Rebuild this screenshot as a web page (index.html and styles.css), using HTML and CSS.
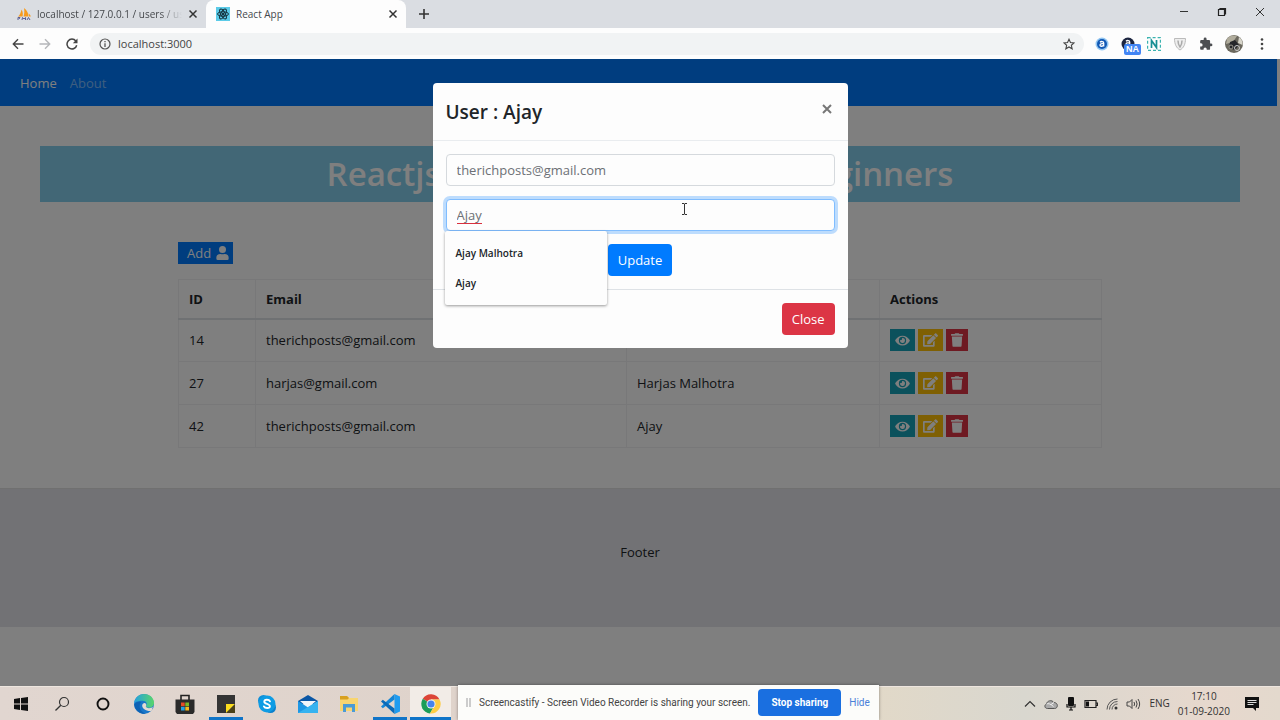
FILE: index.html
```html
<!DOCTYPE html>
<html lang="en">

<head>
    <meta charset="UTF-8">
    <meta name="viewport" content="width=device-width, initial-scale=1.0">
    <title>React App</title>
    <link rel="stylesheet" href="styles.css">
</head>

<body>
    <!-- shared icons -->
    <svg class="sprite" aria-hidden="true">
        <symbol id="icon-close" viewBox="0 0 10 10">
            <path d="M1.5 1.5l7 7M8.500 1.500l-7 7" fill="none" stroke="currentColor" stroke-width="1.500" />
        </symbol>
        <symbol id="icon-eye" viewBox="0 0 576 512">
            <path fill="currentColor" d="M572 241C518 136 411 64 288 64S58 136 4 241a32 32 0 0 0 0 30c54 105 161 177 284 177s230-72 284-177a32 32 0 0 0 0-30zM288 400a144 144 0 1 1 0-288 144 144 0 0 1 0 288zm0-240a95 95 0 0 0-25 4 48 48 0 0 1-67 67 96 96 0 1 0 92-71z" />
        </symbol>
        <symbol id="icon-edit" viewBox="0 0 576 512">
            <path fill="currentColor" d="M402 84l90 90c4 4 4 10 0 14L274 406l-93 10c-12 2-23-9-21-21l10-93L388 84c4-4 10-4 14 0zm162-23l-49-49c-15-15-40-15-55 0l-35 35c-4 4-4 10 0 14l90 90c4 4 10 4 14 0l35-35c15-15 15-40 0-55zM384 346v102H64V128h230c3 0 6-1 8-4l40-40c8-7 3-20-8-20H48C22 64 0 86 0 112v352c0 27 22 48 48 48h352c27 0 48-21 48-48V306c0-11-13-16-20-8l-40 40c-3 2-4 5-4 8z" />
        </symbol>
        <symbol id="icon-trash" viewBox="0 0 448 512">
            <path fill="currentColor" d="M432 32H312l-9-19a24 24 0 0 0-22-13H167a24 24 0 0 0-22 13l-9 19H16A16 16 0 0 0 0 48v32a16 16 0 0 0 16 16h416a16 16 0 0 0 16-16V48a16 16 0 0 0-16-16zM32 128l21 339a48 48 0 0 0 48 45h246a48 48 0 0 0 48-45l21-339z" />
        </symbol>
    </svg>

    <header class="browser">
        <div class="tabs">
            <div class="tab">
                <svg class="favicon" viewBox="0 0 14 14">
                    <path d="M1 9.500C3 8 4 5 4.500 2.500 6 5 6 7.500 5.500 9.500zM6.500 9.500C7.500 7 7.500 4 7 1c3 2 4.500 5.500 4.500 8.500zM12 9.500c0-1.500 0-2-.5-3 1 .5 2 1.500 2.300 3z" fill="#f79a1c" />
                    <path d="M1 13v-2.500h2l-1 1.500M5 13l.5-2.500L7 12l1.500-1.500V13M10 13l1.500-2.500L13 13" fill="none" stroke="#5b5f94" />
                </svg>
                <span class="tab-title faded">localhost / 127.0.0.1 / users / use</span>
                <button class="icon-btn" aria-label="Close tab"><svg width="10" height="10"><use href="#icon-close" /></svg></button>
            </div>
            <div class="tab active">
                <svg class="favicon" viewBox="0 0 14 14">
                    <path d="M0 0h14v14H0z" fill="#5ccbe8" />
                    <g fill="none" stroke="#15323c">
                        <ellipse cx="7" cy="7" rx="5.500" ry="2.200" />
                        <ellipse cx="7" cy="7" rx="5.500" ry="2.200" transform="rotate(60 7 7)" />
                        <ellipse cx="7" cy="7" rx="5.500" ry="2.200" transform="rotate(120 7 7)" />
                    </g>
                    <circle cx="7" cy="7" r="1.200" fill="#15323c" />
                </svg>
                <span class="tab-title">React App</span>
                <button class="icon-btn" aria-label="Close tab"><svg width="10" height="10"><use href="#icon-close" /></svg></button>
            </div>
            <button class="icon-btn new-tab" aria-label="New tab"><svg width="12" height="12" viewBox="0 0 12 12"><path d="M6 1v10M1 6h10" stroke="#333" stroke-width="1.600" /></svg></button>
            <div class="window-controls">
                <button class="icon-btn" aria-label="Minimize"><svg width="10" height="10" viewBox="0 0 10 10"><path d="M1 4.500h8" stroke="#333" /></svg></button>
                <button class="icon-btn" aria-label="Restore"><svg width="10" height="10" viewBox="0 0 10 10"><path d="M1.500 2.500h6v6h-6zM3 2.500v-1h5.500V7h-1" fill="none" stroke="#222" stroke-width="1.200" /></svg></button>
                <button class="icon-btn" aria-label="Close"><svg width="10" height="10" viewBox="0 0 10 10"><path d="M1 1l8 8M9 1L1 9" stroke="#333" /></svg></button>
            </div>
        </div>

        <div class="toolbar">
            <div class="nav-buttons">
                <button class="icon-btn" aria-label="Back"><svg width="12" height="12" viewBox="0 0 12 12"><path d="M11.500 6H1.500M6 1.300L1.300 6 6 10.700" fill="none" stroke="#444" stroke-width="1.400" /></svg></button>
                <button class="icon-btn" aria-label="Forward"><svg width="12" height="12" viewBox="0 0 12 12"><path d="M.5 6h10M6 1.300L10.700 6 6 10.700" fill="none" stroke="#b5b7ba" stroke-width="1.400" /></svg></button>
                <button class="icon-btn" aria-label="Reload"><svg width="12" height="12" viewBox="0 0 12 12"><path d="M10.700 7.200A4.900 4.900 0 1 1 9.800 3" fill="none" stroke="#444" stroke-width="1.500" /><path d="M11.500.5v4.700H6.800z" fill="#444" /></svg></button>
            </div>
            <div class="omnibox">
                <svg width="12" height="12" viewBox="0 0 12 12"><circle cx="6" cy="6" r="5" fill="none" stroke="#555" stroke-width="1.200" /><path d="M6 5.200V9M6 3v1.300" stroke="#555" stroke-width="1.300" /></svg>
                <input type="text" aria-label="Address" value="localhost:3000">
                <button class="icon-btn" aria-label="Bookmark"><svg width="12" height="12" viewBox="0 0 24 24"><path d="M12 2.500l2.900 6.600 7.200.7-5.400 4.800 1.600 7L12 17.900l-6.300 3.700 1.600-7L1.900 9.800l7.200-.7z" fill="none" stroke="#444" stroke-width="2.200" /></svg></button>
            </div>
            <div class="extensions">
                <button class="icon-btn" aria-label="Extension"><svg width="14" height="14" viewBox="0 0 14 14"><circle cx="7" cy="7" r="6.500" fill="#93c7f2" /><circle cx="7" cy="7" r="5" fill="#1259b5" /><path d="M5 5.200c1-1 3.700-1 3.700.7v3.600M8.700 6.800C6.500 6.500 5 7 5 8.200s2.700 1.600 3.700 0" fill="none" stroke="#fff" stroke-width="1.300" /></svg></button>
                <button class="icon-btn badged" aria-label="Extension"><svg width="14" height="14" viewBox="0 0 14 14"><circle cx="7" cy="7" r="6.500" fill="#1c2540" /><path d="M5 4.200c1-1 3.700-1 3.700.7v3M8.700 6C6.500 5.500 5 6 5 7.200" fill="none" stroke="#fff" stroke-width="1.300" /></svg><span class="badge">NA</span></button>
                <button class="icon-btn" aria-label="Extension"><svg width="14" height="14" viewBox="0 0 14 14"><path d="M.6.6h12.800v12.800H.6z" fill="none" stroke="#3bb3b0" stroke-width="1.200" stroke-dasharray="3 2" /><path d="M4.500 11V3.500l5 7V3" fill="none" stroke="#168f94" stroke-width="1.700" /></svg></button>
                <button class="icon-btn" aria-label="Extension"><svg width="14" height="14" viewBox="0 0 14 14"><path d="M1.500 1.500h11c0 6-2 9.500-5.500 11.500-3.500-2-5.500-5.500-5.500-11.500z" fill="#eee" stroke="#bbb" /><path d="M5 3.500c0 3 .7 5 2 6.500 1.300-1.500 2-3.500 2-6.500" fill="none" stroke="#aaa" stroke-width="1.500" /></svg></button>
                <button class="icon-btn" aria-label="Extensions"><svg width="14" height="14" viewBox="0 0 24 24"><path d="M20.500 11H19V7a2 2 0 0 0-2-2h-4V3.500a2.500 2.500 0 0 0-5 0V5H4a2 2 0 0 0-2 2v3.800h1.500a2.700 2.700 0 0 1 0 5.400H2V20c0 1.100.9 2 2 2h3.800v-1.500a2.700 2.700 0 0 1 5.400 0V22H17a2 2 0 0 0 2-2v-4h1.500a2.500 2.500 0 0 0 0-5z" fill="#4d4f52" /></svg></button>
                <button class="icon-btn" aria-label="Profile"><svg width="18" height="18" viewBox="0 0 18 18"><circle cx="9" cy="9" r="9" fill="#6b685e" /><path d="M2 3.500C5 0 9 0 12 1L8 7l-7 2z" fill="#b0ac9c" /><path d="M14 2c3 2 4 6 3.500 8L13 8z" fill="#d8d6cb" /><path d="M5 7l5-2 4 5-4 5-6-2z" fill="#25262a" /><circle cx="12" cy="13" r="2.500" fill="none" stroke="#ccc" /><circle cx="6" cy="12" r="2" fill="none" stroke="#99968c" /></svg></button>
                <button class="icon-btn" aria-label="Menu"><svg width="14" height="14" viewBox="0 0 14 14"><g fill="#444"><circle cx="7" cy="2.500" r="1.300" /><circle cx="7" cy="7" r="1.300" /><circle cx="7" cy="11.500" r="1.300" /></g></svg></button>
            </div>
        </div>
    </header>

    <main class="viewport">
        <nav class="navbar">
            <a class="nav-link active" href="#">Home</a>
            <a class="nav-link" href="#">About</a>
        </nav>

        <h1 class="page-title">Reactjs Crud Tutorial App for Beginners</h1>

        <div class="container">
            <button class="btn-sm btn-add">Add <svg width="13" height="14" viewBox="0 0 448 512"><path fill="currentColor" d="M224 256a128 128 0 1 0 0-256 128 128 0 0 0 0 256zm90 32h-17a174 174 0 0 1-146 0h-17C60 288 0 348 0 422v42a48 48 0 0 0 48 48h352a48 48 0 0 0 48-48v-42c0-74-60-134-134-134z" /></svg></button>
            <table class="users">
                <thead>
                    <tr>
                        <th class="col-id">ID</th>
                        <th class="col-email">Email</th>
                        <th class="col-name">Username</th>
                        <th>Actions</th>
                    </tr>
                </thead>
                <tbody>
                    <tr>
                        <td>14</td>
                        <td>therichposts@gmail.com</td>
                        <td>Ajay</td>
                        <td>
                            <div class="actions">
                                <button class="btn-sm btn-info" aria-label="View"><svg width="15" height="13"><use href="#icon-eye" /></svg></button>
                                <button class="btn-sm btn-warning" aria-label="Edit"><svg width="15" height="14"><use href="#icon-edit" /></svg></button>
                                <button class="btn-sm btn-danger" aria-label="Delete"><svg width="12" height="14"><use href="#icon-trash" /></svg></button>
                            </div>
                        </td>
                    </tr>
                    <tr>
                        <td>27</td>
                        <td>harjas@gmail.com</td>
                        <td>Harjas Malhotra</td>
                        <td>
                            <div class="actions">
                                <button class="btn-sm btn-info" aria-label="View"><svg width="15" height="13"><use href="#icon-eye" /></svg></button>
                                <button class="btn-sm btn-warning" aria-label="Edit"><svg width="15" height="14"><use href="#icon-edit" /></svg></button>
                                <button class="btn-sm btn-danger" aria-label="Delete"><svg width="12" height="14"><use href="#icon-trash" /></svg></button>
                            </div>
                        </td>
                    </tr>
                    <tr>
                        <td>42</td>
                        <td>therichposts@gmail.com</td>
                        <td>Ajay</td>
                        <td>
                            <div class="actions">
                                <button class="btn-sm btn-info" aria-label="View"><svg width="15" height="13"><use href="#icon-eye" /></svg></button>
                                <button class="btn-sm btn-warning" aria-label="Edit"><svg width="15" height="14"><use href="#icon-edit" /></svg></button>
                                <button class="btn-sm btn-danger" aria-label="Delete"><svg width="12" height="14"><use href="#icon-trash" /></svg></button>
                            </div>
                        </td>
                    </tr>
                </tbody>
            </table>
        </div>

        <footer class="footer">Footer</footer>

        <div class="backdrop">
            <div class="modal" role="dialog" aria-labelledby="modal-title">
                <div class="modal-header">
                    <h2 id="modal-title">User : Ajay</h2>
                    <button class="icon-btn modal-close" aria-label="Close"><svg width="10" height="10" viewBox="0 0 10 10"><path d="M1 1l8 8M9 1L1 9" stroke="#777" stroke-width="2" /></svg></button>
                </div>
                <form class="modal-body" onsubmit="return false">
                    <input class="form-control" type="text" aria-label="Email" value="therichposts@gmail.com">
                    <div class="suggest-field">
                        <input class="form-control focused misspelled" type="text" aria-label="Username" value="Ajay" autocomplete="off">
                        <ul class="suggestions">
                            <li>Ajay Malhotra</li>
                            <li>Ajay</li>
                        </ul>
                        <svg class="cursor" width="7" height="12" viewBox="0 0 7 12"><path d="M1 .5h2l.5.500L4 .5h2M3.500 1v10M1 11.500h2l.5-.5.5.5h2" fill="none" stroke="#333" /></svg>
                    </div>
                    <button class="btn btn-primary">Update</button>
                </form>
                <div class="modal-footer">
                    <button class="btn btn-close">Close</button>
                </div>
            </div>
        </div>
    </main>

    <div class="taskbar">
        <div class="apps">
            <button class="app" aria-label="Start"><svg width="16" height="16" viewBox="0 0 16 16"><path d="M1 3l6-1v5.600H1zM8 1.900L15 1v6.600H8zM1 8.400h6V14l-6-1zM8 8.400h7V15l-7-.9z" fill="#111" /></svg></button>
            <button class="app" aria-label="Search"><svg width="16" height="16" viewBox="0 0 16 16"><circle cx="10" cy="6" r="4.500" fill="none" stroke="#333" stroke-width="1.200" /><path d="M6.800 9.200L1.500 14.500" stroke="#333" stroke-width="1.300" /></svg></button>
            <button class="app" aria-label="Cortana"><svg width="16" height="16" viewBox="0 0 16 16"><circle cx="8" cy="8" r="5.500" fill="none" stroke="#111" stroke-width="1.900" /></svg></button>
            <button class="app" aria-label="Edge"><svg width="20" height="20" viewBox="0 0 20 20">
                <defs><linearGradient id="edge-top"><stop offset="0" stop-color="#249fe0" /><stop offset="1" stop-color="#59d66a" /></linearGradient></defs>
                <circle cx="10" cy="10" r="10" fill="#1876c9" />
                <path d="M0 9.500C.5 4 4.700 0 10 0c5.800 0 10 4 10 8.800 0 3.200-2.500 5-5 5-2.200 0-3.500-.8-3-1.500 1.800-2.500.2-5.500-3.400-5.500C4 6.800.8 8 0 9.500z" fill="url(#edge-top)" />
                <path d="M11 9c2 1.300 1.200 2.900.8 3.600 0 1.200 3.800 2.700 7.200.2L17.500 17C12 17.500 8 14.500 8.200 11.500 8.300 10 9.500 8.800 11 9z" fill="#e3dad3" />
                <path d="M7 8c-3 4-1 10 5 11.800C5 20.500.5 15 .2 10.500 2 8 4.500 7.600 7 8z" fill="#0d62b4" />
            </svg></button>
            <button class="app" aria-label="Store"><svg width="20" height="20" viewBox="0 0 20 20"><path d="M6 6V1.500h8V6" fill="none" stroke="#222" stroke-width="1.600" /><path d="M.5 5.500h19V18l-1.500 2H2L.5 18z" fill="#2a2a2a" /><path d="M6 8.500h3.700v3.700H6z" fill="#e64b26" /><path d="M10.300 8.500H14v3.700h-3.700z" fill="#7ab829" /><path d="M6 12.800h3.700v3.700H6z" fill="#22a1e2" /><path d="M10.300 12.800H14v3.700h-3.700z" fill="#f4b81e" /></svg></button>
            <button class="app open" aria-label="Sticky Notes"><svg width="18" height="18" viewBox="0 0 18 18"><path d="M0 0h18v9l-9 9H0z" fill="#343434" /><path d="M9 9h9l-9 9z" fill="#fbdc1e" /><path d="M18 9v9H9z" fill="#4b4119" /></svg></button>
            <button class="app" aria-label="Skype"><svg width="20" height="20" viewBox="0 0 20 20"><circle cx="6.500" cy="6.500" r="5.500" fill="#0d8fd8" /><circle cx="13.500" cy="13.500" r="5.500" fill="#0a80cd" /><circle cx="10" cy="10" r="8.500" fill="#0e9ce4" /><path d="M13 7.300C12 5.300 7.300 5.200 7.300 7.700c0 2.600 5.600 1.700 5.600 4.500 0 2.500-5 2.400-6 .2" fill="none" stroke="#fff" stroke-width="1.900" stroke-linecap="round" /></svg></button>
            <button class="app" aria-label="Mail"><svg width="20" height="18" viewBox="0 0 20 18"><path d="M0 6l10-6 10 6v3H0z" fill="#0b57a5" /><path d="M2 6h16l-8 7z" fill="#f2f6fb" /><path d="M0 6l10 6.500L20 6v12H0z" fill="#1e97e4" /><path d="M0 18L20 6v12z" fill="#36b3f0" /></svg></button>
            <button class="app" aria-label="File Explorer"><svg width="18" height="18" viewBox="0 0 18 18"><path d="M0 1h7l2 2h9v13H0z" fill="#f8d571" /><path d="M0 1h7l2 2-1.500 1.500H0z" fill="#d8a020" /><path d="M3 17V9h12v8h-3v-4.500H6V17z" fill="#4b9bd6" /></svg></button>
            <button class="app open" aria-label="Visual Studio Code"><svg width="20" height="20" viewBox="0 0 20 20"><path d="M14.500 0L20 2.500v15L14.500 20z" fill="#1f9cf0" /><path d="M14.500 0L1 12.500l1.800 1.800L14.500 5.500z" fill="#1486d6" /><path d="M14.500 20L1 7.500l1.800-1.800 11.700 8.800z" fill="#0a6ab8" /></svg></button>
            <button class="app open current" aria-label="Chrome"><svg width="20" height="20" viewBox="0 0 20 20"><path d="M10 10L1.800 4.800A9.600 9.600 0 0 1 18.500 5.500H10z" fill="#dc4437" /><path d="M10 10l-8.200-5.200A9.600 9.600 0 0 0 9 19.500l4-7z" fill="#1b9d59" /><path d="M10 5.500h8.500A9.600 9.600 0 0 1 9 19.500l4.500-8z" fill="#fccc45" /><circle cx="10" cy="10" r="4.500" fill="#f4f4f4" /><circle cx="10" cy="10" r="3.600" fill="#4583ec" /></svg></button>
        </div>

        <div class="tray">
            <svg width="12" height="12" viewBox="0 0 12 12"><path d="M1 8.500l5-5 5 5" fill="none" stroke="#333" stroke-width="1.200" /></svg>
            <svg width="14" height="12" viewBox="0 0 14 12"><path d="M3.500 10.500C.5 10.500 0 7 2.500 6 3 2.500 8 1.500 9.800 4.500c3 0 4.200 2.500 3.200 4.500-.5 1-1.200 1.500-2.500 1.500z" fill="#aaa" stroke="#555" /><path d="M2.500 6c2-1 4 0 7 2.500M7 6.500l3-2" fill="none" stroke="#eee" /></svg>
            <svg width="10" height="14" viewBox="0 0 10 14"><rect x="2" width="6" height="9" rx="1" fill="#111" /><path d="M1 7v3h8V7M5 10v3M3 13h4" fill="none" stroke="#111" stroke-width="1.200" /></svg>
            <svg width="14" height="12" viewBox="0 0 14 12"><path d="M1 2.500h11v7H1zM12 5h1.500v2.500H12" fill="none" stroke="#222" stroke-width="1.200" /><path d="M2 3.500h3v5H2z" fill="#111" /></svg>
            <svg width="12" height="12" viewBox="0 0 12 12"><g fill="none" stroke="#555"><path d="M1 11.500A10.500 10.500 0 0 1 11.500 1M3.500 11.500a8 8 0 0 1 8-8M6 11.500A5.500 5.500 0 0 1 11.500 6" /></g><circle cx="10" cy="10" r="1.500" fill="#333" /></svg>
            <svg width="15" height="12" viewBox="0 0 15 12"><path d="M1 4h2.500L6 1.500v9L3.500 8H1zM8 4q1.200 2 0 4M10 2.500q2.200 3.500 0 7M12 1q3.300 5 0 10" fill="none" stroke="#444" /></svg>
            <span class="lang">ENG</span>
            <div class="clock">
                <div>17:10</div>
                <div>01-09-2020</div>
            </div>
            <svg class="notify" width="14" height="14" viewBox="0 0 14 14"><path d="M0 0h14v11h-3v3l-3-3H0z" fill="#111" /><path d="M2.500 3.500h9M2.500 5.500h9M2.500 7.500h6" stroke="#ddd" /></svg>
        </div>

        <div class="share-bar">
            <span class="grip"></span>
            <span>Screencastify - Screen Video Recorder is sharing your screen.</span>
            <button class="stop">Stop sharing</button>
            <a href="#">Hide</a>
        </div>
    </div>
</body>

</html>
```
FILE: styles.css
```css
* {
    box-sizing: border-box;
    margin: 0;
    padding: 0;
}

body {
    display: flex;
    flex-direction: column;
    min-height: 100vh;
    font-family: "Segoe UI", "Open Sans", "Noto Sans", sans-serif;
    font-size: 13px;
    line-height: 22px;
    color: #212529;
}

button,
input {
    font: inherit;
    color: inherit;
}

button {
    border: 0;
    background: none;
    cursor: pointer;
}

svg {
    display: block;
    flex: none;
}

.sprite {
    position: absolute;
    width: 0;
    height: 0;
}

.icon-btn {
    display: flex;
    align-items: center;
    justify-content: center;
    color: #333;
}

/* browser window */

.browser {
    background: #dadde2;
}

.tabs {
    display: flex;
    align-items: center;
    height: 28px;
}

.tab {
    display: flex;
    align-items: center;
    gap: 6px;
    width: 206px;
    height: 28px;
    padding: 0 8px 0 17px;
    font-size: 10px;
    color: #45484c;
}

.tab.active {
    width: 200px;
    padding-left: 10px;
    border-radius: 8px 8px 0 0;
    background: #fdfdfd;
}

.favicon {
    width: 14px;
    height: 14px;
}

.tab-title {
    flex: 1;
    overflow: hidden;
    white-space: nowrap;
}

.tab-title.faded {
    -webkit-mask-image: linear-gradient(to right, #000 85%, transparent);
    mask-image: linear-gradient(to right, #000 85%, transparent);
}

.new-tab {
    margin-left: 12px;
}

.window-controls {
    display: flex;
    gap: 28px;
    margin-left: auto;
    padding: 0 15px 4px 0;
}

.toolbar {
    display: flex;
    align-items: center;
    height: 31px;
    padding: 0 11px 0 12px;
    background: #fdfdfd;
}

.nav-buttons {
    display: flex;
    gap: 15px;
}

.omnibox {
    display: flex;
    flex: 1;
    align-items: center;
    gap: 7px;
    height: 22px;
    margin: 0 11px 0 12px;
    padding: 0 9px;
    border-radius: 11px;
    background: #f1f3f4;
}

.omnibox input {
    flex: 1;
    border: 0;
    outline: 0;
    background: none;
    font-size: 11px;
    line-height: 20px;
    color: #444;
}

.extensions {
    display: flex;
    align-items: center;
    gap: 12px;
}

.badged {
    position: relative;
}

.badge {
    position: absolute;
    top: 7px;
    left: 3px;
    padding: 0 2px;
    border-radius: 2px;
    background: #4285f4;
    font: bold 9px/11px "Liberation Sans", Arial, sans-serif;
    color: #fff;
}

/* react page */

.viewport {
    position: relative;
    flex: 1;
    background: #fff;
}

.navbar {
    display: flex;
    align-items: center;
    gap: 13px;
    height: 47px;
    margin-right: 3px;
    padding: 0 20px;
    background: #007bff;
}

.nav-link {
    color: rgba(255, 255, 255, .5);
    text-decoration: none;
}

.nav-link.active {
    color: #fff;
}

.page-title {
    margin: 40px;
    padding: 6px;
    background: #84ceec;
    font-size: 33px;
    font-weight: 600;
    line-height: 44px;
    text-align: center;
    color: #fff;
}

.container {
    max-width: 924px;
    margin: 0 auto 40px;
}

.btn-sm {
    display: flex;
    align-items: center;
    height: 22px;
    padding: 0 5px;
    color: #fff;
}

.btn-add {
    gap: 5px;
    margin-bottom: 15px;
    padding: 0 4px 0 9px;
    background: #007bff;
}

.btn-info {
    background: #17a2b8;
}

.btn-warning {
    background: #ffc107;
}

.btn-danger {
    background: #dc3545;
}

.users {
    width: 100%;
    border-collapse: collapse;
    table-layout: fixed;
}

.users th,
.users td {
    height: 43px;
    padding: 0 10px;
    border: 1px solid #f0f1f3;
    text-align: left;
}

.users th {
    height: 39px;
    border-bottom: 2px solid #dee2e6;
    font-weight: 700;
}

.col-id {
    width: 77px;
}

.col-email {
    width: 371px;
}

.col-name {
    width: 253px;
}

.actions {
    display: flex;
    gap: 3px;
}

.footer {
    padding: 48px 0 60px;
    margin-bottom: 58px;
    border-top: 1px solid #e0e0e0;
    background: #e4e5ea;
    line-height: 30px;
    text-align: center;
}

/* modal */

.backdrop {
    position: absolute;
    inset: 0;
    padding-top: 24px;
    background: rgba(0, 0, 0, .5);
}

.modal {
    max-width: 415px;
    margin: 0 auto;
    border-radius: 4px;
    background: #fdfdfd;
}

.modal-header {
    display: flex;
    justify-content: space-between;
    align-items: flex-start;
    padding: 14px 13px 13px;
    border-bottom: 1px solid #e9ecef;
}

.modal-header h2 {
    font-size: 19px;
    font-weight: 600;
    line-height: 30px;
}

.modal-close {
    padding: 7px 3px;
}

.modal-body {
    display: flex;
    flex-direction: column;
    gap: 13px;
    padding: 13px;
}

.form-control {
    display: block;
    width: 100%;
    height: 32px;
    padding: 0 10px;
    border: 1px solid #d5d9dd;
    border-radius: 4px;
    outline: 0;
    background: #fdfdfd;
    color: #6c7075;
}

.form-control.focused {
    border-color: #80bdff;
    box-shadow: 0 0 0 3px rgba(0, 123, 255, .25);
}

/* red line under the name */
.form-control.misspelled {
    background: linear-gradient(#d9303e, #d9303e) 10px 23px / 25px 1px no-repeat #fdfdfd;
}

.suggest-field {
    position: relative;
}

.suggestions {
    position: absolute;
    top: 32px;
    left: -1px;
    width: 162px;
    padding: 7px 0;
    border-radius: 2px;
    background: #fdfdfd;
    box-shadow: 0 1px 3px rgba(0, 0, 0, .4);
    list-style: none;
    font-size: 10px;
    font-weight: 600;
    line-height: 30px;
}

.suggestions li {
    padding: 0 11px;
}

.cursor {
    position: absolute;
    top: 4px;
    left: 235px;
}

.btn {
    height: 32px;
    padding: 0 10px;
    border-radius: 4px;
    color: #fff;
}

.btn-primary {
    align-self: center;
    background: #007bff;
}

.modal-footer {
    display: flex;
    justify-content: flex-end;
    padding: 13px;
    border-top: 1px solid #dee2e6;
}

.btn-close {
    background: #dc3545;
}

/* windows taskbar */

.taskbar {
    position: relative;
    display: flex;
    justify-content: space-between;
    height: 34px;
    border-top: 1px solid #eee6df;
    background: linear-gradient(to right, #e1d6d0, #dfd3cb 35%, #e2d9c8 68%, #d9d7cf 80%, #e7d8cd 95%, #e3d9cd);
}

.apps {
    display: flex;
}

.app {
    display: flex;
    align-items: center;
    justify-content: center;
    width: 41px;
}

.app.open {
    background: linear-gradient(#0f74c8, #0f74c8) bottom / 34px 3px no-repeat;
}

.app.current {
    background: linear-gradient(#0f74c8, #0f74c8) bottom / 41px 3px no-repeat, #f2ece7;
}

.tray {
    display: flex;
    align-items: center;
    gap: 8px;
    padding-right: 21px;
    font-size: 10px;
    line-height: 15px;
    color: #333;
}

.clock {
    text-align: center;
}

.notify {
    margin-left: 7px;
}

.share-bar {
    position: absolute;
    bottom: 0;
    left: 458px;
    display: flex;
    align-items: center;
    gap: 8px;
    height: 35px;
    padding: 0 9px 0 8px;
    background: #fcfcfa;
    box-shadow: 0 0 3px rgba(0, 0, 0, .4);
    font-family: "Segoe UI", Roboto, sans-serif;
    font-size: 10px;
    color: #444;
    white-space: nowrap;
}

.grip {
    width: 5px;
    height: 9px;
    border: 1px solid #ccc;
    border-width: 0 2px;
}

.stop {
    height: 27px;
    padding: 0 13px;
    border-radius: 4px;
    background: #1a6fe0;
    font-weight: 700;
    color: #fff;
}

.share-bar a {
    color: #4a80d8;
    text-decoration: none;
}
```
